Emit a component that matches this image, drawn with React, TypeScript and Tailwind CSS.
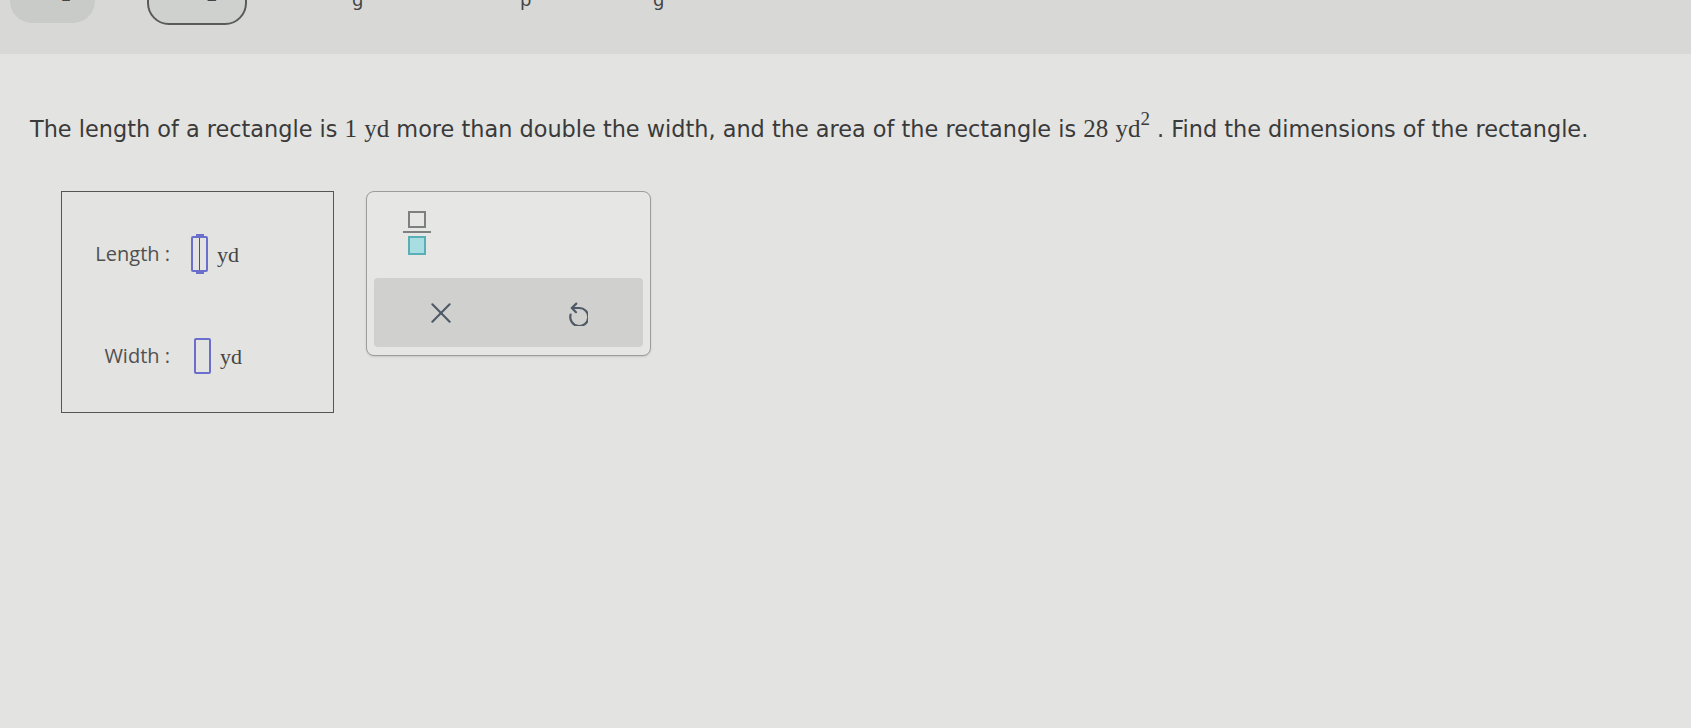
import React from 'react';

function FractionIcon() {
  return (
    <div className="flex w-[28px] flex-col items-center">
      <div className="h-[17px] w-[18px] border-2 border-[#7d7f80]" />
      <div className="my-[3px] h-[2px] w-[28px] bg-[#7d7f80]" />
      <div className="h-[19px] w-[18px] border-2 border-[#5aaeb6] bg-[#a8dde2]" />
    </div>
  );
}

function CloseIcon() {
  return (
    <svg width="20" height="20" viewBox="0 0 22 22" fill="none" stroke="#4f5a66" strokeWidth="2.3" strokeLinecap="round">
      <path d="M1.5 1.5 L20.5 20.5" />
      <path d="M20.5 1.5 L1.5 20.5" />
    </svg>
  );
}

function UndoIcon() {
  return (
    <svg width="24" height="26" viewBox="6 7 24 26" fill="none" stroke="#4f5a66" strokeWidth="2.2" strokeLinecap="round" strokeLinejoin="round">
      <path d="M21 15 A9 9 0 1 1 12.6 21.6" />
      <path d="M21 15 H14" />
      <path d="M18.3 10.6 L13.8 15 L18 19.2" />
    </svg>
  );
}

function AnswerBox({ active }: { active?: boolean }) {
  return (
    <span className="relative inline-flex h-[36px] w-[17px] items-center justify-center rounded-[2px] border-2 border-[#6b6fcc]">
      {active && (
        <>
          <span className="h-[32px] w-[1.5px] bg-[#555]" />
          <span className="absolute -top-[4px] left-1/2 h-[3px] w-[8px] -translate-x-1/2 bg-[#6b6fcc]" />
          <span className="absolute -bottom-[4px] left-1/2 h-[3px] w-[8px] -translate-x-1/2 bg-[#6b6fcc]" />
        </>
      )}
    </span>
  );
}

export default function App() {
  const serif = { fontFamily: '"Liberation Serif", "DejaVu Serif", serif' };

  return (
    <div className="relative min-h-screen w-full overflow-hidden bg-[#e3e3e1] text-[#3b3b3b]" style={{ fontFamily: '"DejaVu Sans", Verdana, sans-serif' }}>
      {/* top nav strip */}
      <div className="relative h-[54px] bg-[#d8d9d7]">
        <div className="flex items-start">
          <div className="ml-[10px] -mt-[27px] flex h-[50px] w-[85px] items-end justify-center gap-[20px] rounded-[22px] bg-[#c9cbc9] pb-[19px] text-[18px] leading-none text-[#444]">
            <span>-</span>
            <span>1</span>
          </div>
          <div className="ml-[52px] -mt-[27px] flex h-[52px] w-[100px] items-end justify-center rounded-[22px] border-2 border-[#5a5a5a] bg-[#cfd1cf] pb-[19px] pl-[30px] text-[18px] leading-none text-[#444]">
            <span>2</span>
          </div>
        </div>
        <span className="absolute -top-[14px] left-[352px] text-[18px] text-[#444]">g</span>
        <span className="absolute -top-[14px] left-[520px] text-[18px] text-[#444]">p</span>
        <span className="absolute -top-[14px] left-[653px] text-[18px] text-[#444]">g</span>
      </div>

      {/* question */}
      <p className="ml-[30px] mt-[62px] whitespace-nowrap text-[22.4px] leading-[26px] text-[#3a3a3a]">
        The length of a rectangle is <span className="text-[25px]" style={serif}>1</span>{' '}
        <span className="text-[25px]" style={serif}>yd</span> more than double the width, and the area of the rectangle is{' '}
        <span className="text-[25px]" style={serif}>28</span>{' '}
        <span className="text-[25px]" style={serif}>
          yd<sup className="-top-[0.65em] text-[19px]">2</sup>
        </span>{' '}
        . Find the dimensions of the rectangle.
      </p>

      {/* answer area */}
      <div className="ml-[61px] mt-[49px] flex items-start gap-[32px]">
        <div className="h-[222px] w-[273px] border border-[#555]" style={{ fontFamily: '"Open Sans", "Noto Sans", sans-serif' }}>
          <div className="mt-[44px] flex items-center">
            <span className="w-[108px] text-right text-[20px] text-[#505050]">Length :</span>
            <span className="ml-[21px] flex items-center">
              <AnswerBox active />
            </span>
            <span className="ml-[9px] text-[22px] text-[#444]" style={serif}>yd</span>
          </div>
          <div className="mt-[66px] flex items-center">
            <span className="w-[108px] text-right text-[20px] text-[#505050]">Width :</span>
            <span className="ml-[24px] flex items-center">
              <AnswerBox />
            </span>
            <span className="ml-[9px] text-[22px] text-[#444]" style={serif}>yd</span>
          </div>
        </div>

        <div className="flex h-[165px] w-[285px] flex-col rounded-[8px] border border-[#9c9d9c] bg-[#e6e6e4] px-[7px] pb-[8px] shadow-[0_1px_2px_rgba(0,0,0,0.12)]">
          <div className="ml-[29px] mt-[19px]">
            <FractionIcon />
          </div>
          <div className="mt-auto grid h-[69px] grid-cols-2 items-center rounded-[4px] bg-[#d0d1cf]">
            <div className="flex justify-center">
              <CloseIcon />
            </div>
            <div className="flex justify-center">
              <UndoIcon />
            </div>
          </div>
        </div>
      </div>
    </div>
  );
}
